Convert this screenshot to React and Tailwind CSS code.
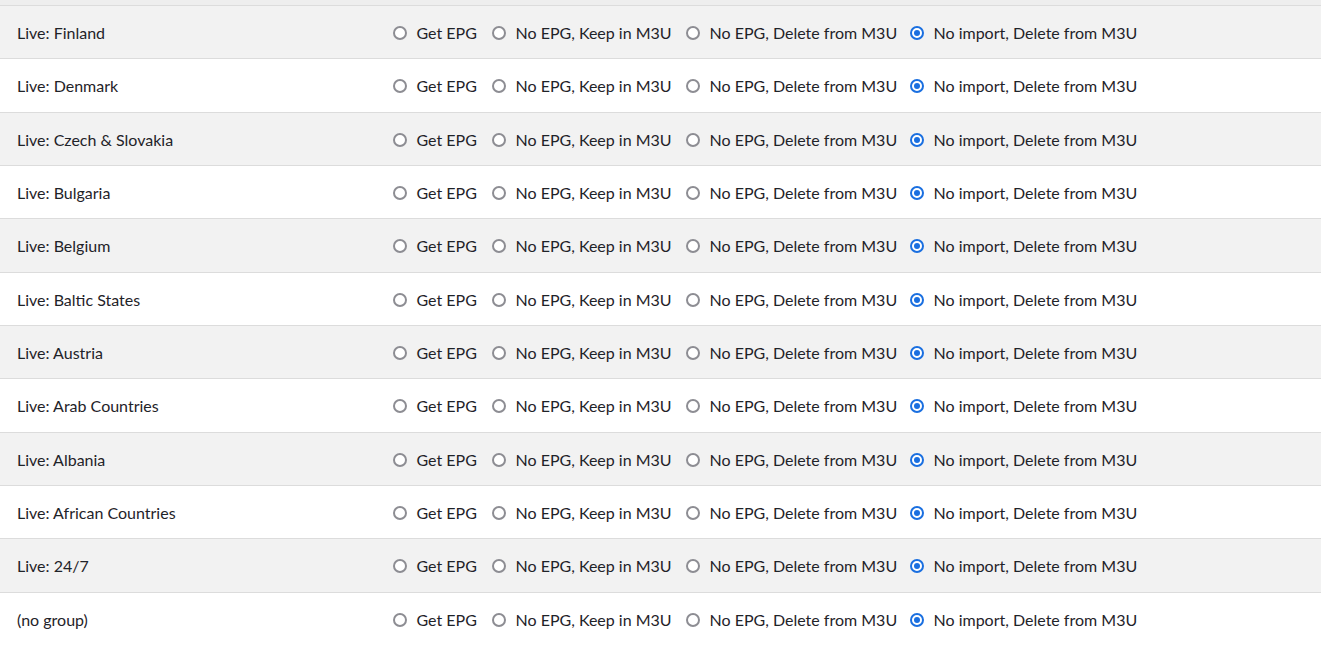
import React from "react";

const groups = [
  "Live: Finland",
  "Live: Denmark",
  "Live: Czech & Slovakia",
  "Live: Bulgaria",
  "Live: Belgium",
  "Live: Baltic States",
  "Live: Austria",
  "Live: Arab Countries",
  "Live: Albania",
  "Live: African Countries",
  "Live: 24/7",
  "(no group)",
];

function Radio({ checked }) {
  if (checked) {
    return (
      <span className="mt-[2px] flex h-[14px] w-[14px] shrink-0 items-center justify-center rounded-full border-2 border-[#1a6fe0] bg-white">
        <span className="h-[6px] w-[6px] rounded-full bg-[#1a6fe0]" />
      </span>
    );
  }
  return <span className="mt-[2px] block h-[14px] w-[14px] shrink-0 rounded-full border-2 border-[#8d8d93] bg-white" />;
}

function Option({ label, checked, width }) {
  return (
    <label className={`flex items-center ${width}`}>
      <Radio checked={checked} />
      <span className="ml-[10px] whitespace-nowrap pt-[2px]">{label}</span>
    </label>
  );
}

export default function App() {
  return (
    <div
      className="min-h-[655px] w-[1321px] bg-white text-[16px] text-[#1f2329]"
      style={{ fontFamily: "Lato, 'Open Sans', sans-serif" }}
    >
      <div className="h-[5px] bg-[#eeeeee]" />
      {groups.map((g, i) => (
        <div
          key={g}
          className={`box-border flex h-[53.33px] items-center border-t border-[#dcdcdc] ${
            i % 2 === 0 ? "bg-[#f2f2f2]" : "bg-white"
          }`}
        >
          <div className="w-[392.5px] shrink-0 pl-[17px] pt-[2px]">{g}</div>
          <Option label="Get EPG" width="w-[99px]" />
          <Option label="No EPG, Keep in M3U" width="w-[194px]" />
          <Option label="No EPG, Delete from M3U" width="w-[224px]" />
          <Option label="No import, Delete from M3U" checked width="" />
        </div>
      ))}
    </div>
  );
}
